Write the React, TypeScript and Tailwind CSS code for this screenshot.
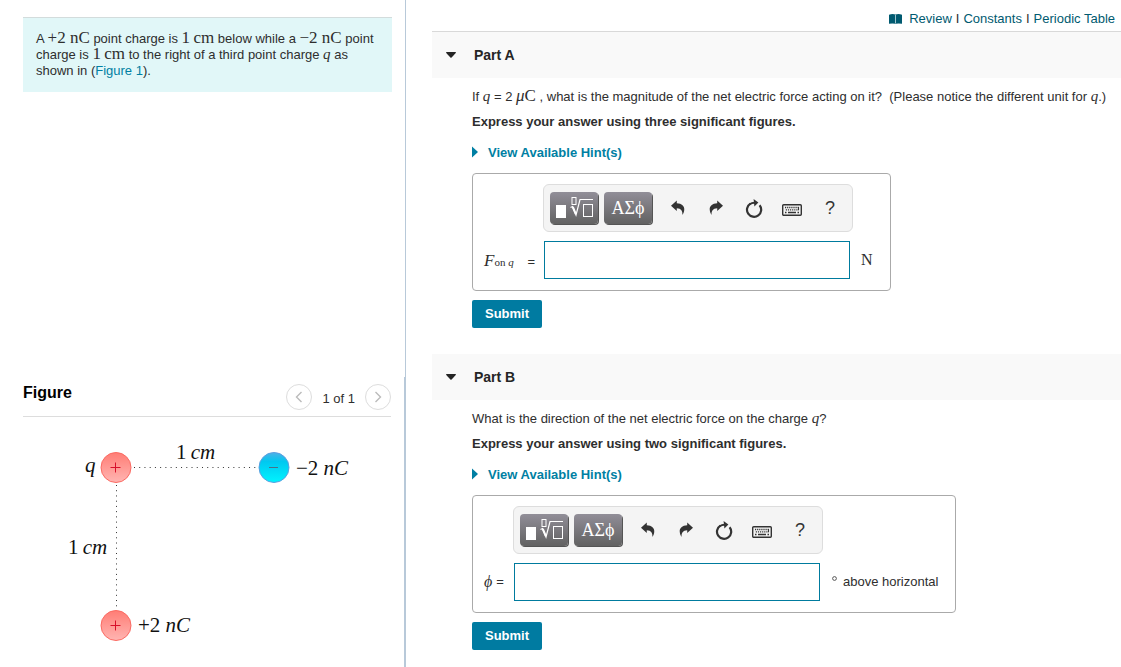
import React, { useState } from "react";

// Inline math set in a serif face, in a box that stays inside the 16px line
function Math({ children, variable = false }: { children: React.ReactNode; variable?: boolean }) {
    return (
        <span
            className={`inline-block font-['Liberation_Serif',serif] leading-[13px] whitespace-nowrap ${variable ? "text-[15px] italic" : "text-[17px]"}`}
        >
            {children}
        </span>
    );
}

function BookIcon() {
    return (
        <svg width="13" height="10" viewBox="0 0 13 10" aria-hidden>
            <path d="M0 .8Q3.5 -.6 6.5 .6Q9.5 -.6 13 .8V9.8Q9.5 9 6.5 9.8Q3.5 9 0 9.8Z" fill="#005a70" />
            <path d="M6.5 .8V9.4" stroke="#9fc4cd" strokeWidth="1" />
        </svg>
    );
}

function TemplateIcon() {
    return (
        <svg width="38" height="22" viewBox="0 0 38 22" aria-hidden fill="none" stroke="#fff">
            <rect x="1" y="8" width="10" height="13" fill="#fff" stroke="none" />
            <rect x="17" y=".5" width="4" height="7" strokeWidth="1" />
            <path d="M15.5 10.5L17.5 9.5L21 18L25 2.5H38" strokeWidth="1.2" />
            <path d="M17.8 10L20.8 17" strokeWidth="2" />
            <rect x="28.5" y="7.5" width="9" height="12" strokeWidth="1" />
        </svg>
    );
}

function UndoIcon({ flip = false }: { flip?: boolean }) {
    return (
        <svg width="14" height="16" viewBox="0 0 15 16" aria-hidden fill="#333" className={flip ? "-scale-x-100" : ""}>
            <path d="M0 5.5L6.2 0V3C11.5 3.2 14.6 6 14.2 10.2C14 12.6 13 14.4 12.2 15.5C12.6 11.5 11 8.4 6.2 8.3V11.2Z" />
        </svg>
    );
}

function ResetIcon() {
    return (
        <svg width="18" height="19" viewBox="0 0 18 19" aria-hidden>
            <path d="M5.4 4.6A7.1 7.1 0 1 0 14.6 6.2" fill="none" stroke="#333" strokeWidth="2.2" />
            <path d="M4.8 5.2Q7 3.6 10 3.8" fill="none" stroke="#333" strokeWidth="2" />
            <path d="M8.6 0L13.4 3.6L9.4 7.4Z" fill="#333" />
        </svg>
    );
}

function KeyboardIcon() {
    return (
        <svg width="20" height="16" viewBox="0 -4 20 16" aria-hidden fill="none" stroke="#333">
            <rect x=".7" y=".7" width="18.6" height="10.6" rx="1" strokeWidth="1.4" />
            <path d="M3 3.5H17" strokeWidth="1.3" strokeDasharray="1.2 .9" />
            <path d="M3.8 5.8H17" strokeWidth="1.3" strokeDasharray="1.2 .9" />
            <path d="M3 8.5H4.5M6 8.5H14M15.5 8.5H17" strokeWidth="1.4" />
            <path d="M16.5 3V6" strokeWidth="1.1" />
        </svg>
    );
}

function ToolButton({ label, children }: { label: string; children: React.ReactNode }) {
    return (
        <button type="button" aria-label={label} className="flex h-[33px] w-[38px] items-center justify-center text-[#333]">
            {children}
        </button>
    );
}

const paletteButton =
    "flex h-8 w-12 items-center justify-center rounded bg-linear-to-b from-[#918e98] to-[#626262] text-white shadow-[1px_1px_0_#555]";

function MathToolbar() {
    return (
        <div
            role="toolbar"
            aria-label="Equation tools"
            className="flex h-12 w-[310px] items-center gap-1.5 rounded-md border border-[#ddd] bg-[#f4f4f4] pl-1.5"
        >
            <button type="button" aria-label="Templates" className={paletteButton}>
                <TemplateIcon />
            </button>
            <button type="button" aria-label="Symbols" className={paletteButton}>
                <span className="font-['Liberation_Serif','DejaVu_Serif',serif] text-[18px] leading-none">ΑΣϕ</span>
            </button>
            <div className="flex pl-px">
                <ToolButton label="Undo">
                    <UndoIcon />
                </ToolButton>
                <ToolButton label="Redo">
                    <UndoIcon flip />
                </ToolButton>
                <ToolButton label="Reset">
                    <ResetIcon />
                </ToolButton>
                <ToolButton label="Keyboard shortcuts">
                    <KeyboardIcon />
                </ToolButton>
                <ToolButton label="Help">
                    <span className="text-[18px] leading-none">?</span>
                </ToolButton>
            </div>
        </div>
    );
}

type PartProps = {
    id: string;
    title: string;
    topBorder?: boolean;
    question: React.ReactNode;
    instruction: string;
    symbol: React.ReactNode;
    unit: React.ReactNode;
};

function Part({ id, title, topBorder = false, question, instruction, symbol, unit }: PartProps) {
    const [open, setOpen] = useState(true);

    return (
        <section>
            <h2 className={`bg-[#f9f9f9] ${topBorder ? "border-t border-[#d9d9d9]" : ""}`}>
                <button
                    type="button"
                    aria-expanded={open}
                    onClick={() => setOpen(!open)}
                    className="flex h-[46px] w-full items-center gap-[18px] pl-3.5 text-left text-[14px] font-bold text-[#252525]"
                >
                    <svg width="10" height="6" viewBox="0 0 10 6" aria-hidden fill="#252525">
                        <path d="M0 .8Q0 0 .8 0H9.2Q10 0 10 .8L5.6 5.6Q5 6 4.4 5.6Z" />
                    </svg>
                    {title}
                </button>
            </h2>

            {open && (
                <form className="pt-[11px] pl-10" onSubmit={(e) => e.preventDefault()}>
                    <p>{question}</p>
                    <p className="mt-[9px] font-bold">{instruction}</p>
                    <button type="button" className="mt-[15px] flex items-center gap-2.5 font-bold text-[#007fa3]">
                        <svg width="6" height="14" viewBox="0 0 6 14" aria-hidden fill="#007fa3">
                            <path d="M0 .5L6 6L0 11.5Z" />
                        </svg>
                        View Available Hint(s)
                    </button>

                    <div className="mt-3 grid w-fit grid-cols-[auto_auto_auto] items-center gap-y-[9px] rounded border border-[#aaa] px-[11px] pt-2.5 pb-[11px]">
                        <div className="col-start-2">
                            <MathToolbar />
                        </div>
                        <label htmlFor={id} className="col-start-1">
                            {symbol}
                        </label>
                        <input id={id} type="text" className="ml-px h-[38px] w-[306px] border border-[#007b9e] bg-white px-2 outline-none" />
                        <span>{unit}</span>
                    </div>

                    <button type="submit" className="mt-[9px] block h-7 w-[70px] rounded-xs bg-[#007ba1] font-bold text-white">
                        Submit
                    </button>
                </form>
            )}
        </section>
    );
}

function Charge({ cx, cy, negative = false }: { cx: number; cy: number; negative?: boolean }) {
    return (
        <g>
            <circle
                cx={cx}
                cy={cy}
                r="15"
                fill={negative ? "url(#negative)" : "url(#positive)"}
                stroke={negative ? "#5b9ee0" : "#fb6a62"}
            />
            <path
                d={negative ? `M${cx - 5} ${cy}h9` : `M${cx - 5.5} ${cy}h10M${cx - 0.5} ${cy - 5}v10`}
                stroke={negative ? "#4a7088" : "#d8102a"}
                strokeWidth="1"
            />
        </g>
    );
}

function ChargeDiagram() {
    return (
        <svg
            width="369"
            height="250"
            viewBox="0 0 369 250"
            role="img"
            aria-label="Charges q, -2 nC and +2 nC"
            className="block font-['Liberation_Serif',serif] text-[21px]"
        >
            <defs>
                <linearGradient id="positive" x1="0" y1="0" x2="0" y2="1">
                    <stop offset="0" stopColor="#ff7d75" />
                    <stop offset="1" stopColor="#ffb5b2" />
                </linearGradient>
                <linearGradient id="negative" x1="0" y1="0" x2="0" y2="1">
                    <stop offset="0" stopColor="#4fb0e6" />
                    <stop offset=".3" stopColor="#00c8f0" />
                    <stop offset="1" stopColor="#00f4ff" />
                </linearGradient>
            </defs>
            <path d="M111 50.5H235M93.5 68V192" fill="none" stroke="#333" strokeDasharray="1 4.23" />
            <Charge cx={93} cy={50.5} />
            <Charge cx={251} cy={50.5} negative />
            <Charge cx={93} cy={208.5} />
            <g fill="#111">
                <text x="62" y="55" fontStyle="italic">q</text>
                <text x="153" y="42">1&#8201;<tspan fontStyle="italic">cm</tspan></text>
                <text x="273" y="58">−2&nbsp;<tspan fontStyle="italic">nC</tspan></text>
                <text x="45" y="137">1&#8201;<tspan fontStyle="italic">cm</tspan></text>
                <text x="115" y="215">+2&nbsp;<tspan fontStyle="italic">nC</tspan></text>
            </g>
        </svg>
    );
}

function PagerButton({ label, d }: { label: string; d: string }) {
    return (
        <button type="button" aria-label={label} className="flex size-[26px] items-center justify-center rounded-full border border-[#ddd]">
            <svg width="8" height="12" viewBox="0 0 8 12" aria-hidden fill="none" stroke="#bbb" strokeWidth="1.4">
                <path d={d} />
            </svg>
        </button>
    );
}

export default function App() {
    return (
        <div className="flex min-h-screen bg-white font-['Liberation_Sans',Arial,sans-serif] text-[13px] leading-4 text-[#2e2e2e]">
            <aside className="flex w-[406px] shrink-0 flex-col justify-between border-r border-[#b8c9d9] pt-[17px]">
                <p className="mr-[13px] ml-[23px] border-t border-[#d3dcdc] bg-[#e1f7f8] py-[13px] pr-2 pl-[13px]">
                    A <Math>+2&nbsp;nC</Math> point charge is <Math>1&#8201;cm</Math> below while a <Math>−2&nbsp;nC</Math> point
                    charge is <Math>1&#8201;cm</Math> to the right of a third point charge <Math variable>q</Math> as shown in (
                    <a href="#figure" className="text-[#007fa3]">
                        Figure 1
                    </a>
                    ).
                </p>

                <section id="figure" className="border-r border-[#b8c9d9] pr-[13px] pl-[23px]">
                    <div className="flex h-10 items-center justify-between border-b border-[#ddd]">
                        <h2 className="pb-2 text-[16px] font-bold text-black">Figure</h2>
                        <div className="flex items-center gap-2.5">
                            <PagerButton label="Previous figure" d="M6.5 1L1.5 6L6.5 11" />
                            <span className="pt-1">1 of 1</span>
                            <PagerButton label="Next figure" d="M1.5 1L6.5 6L1.5 11" />
                        </div>
                    </div>
                    <ChargeDiagram />
                </section>
            </aside>

            <main className="min-w-0 flex-1 pl-[26px]">
                <nav className="flex h-[31px] items-center justify-end gap-1 pt-1.5 pr-1.5 text-[#005a70]">
                    <a href="#review" className="flex items-center gap-[7px]">
                        <BookIcon />
                        Review
                    </a>
                    <span className="text-[#2e2e2e]">I</span>
                    <a href="#constants">Constants</a>
                    <span className="text-[#2e2e2e]">I</span>
                    <a href="#periodic-table">Periodic Table</a>
                </nav>

                <div className="flex flex-col gap-[26px]">
                    <Part
                        id="force"
                        title="Part A"
                        topBorder
                        question={
                            <>
                                If <Math variable>q</Math> = 2 <Math><i>μ</i>C</Math> , what is the magnitude of the net electric force
                                acting on it?&nbsp; (Please notice the different unit for <Math variable>q</Math>.)
                            </>
                        }
                        instruction="Express your answer using three significant figures."
                        symbol={
                            <span className="flex w-[59px] items-baseline font-['Liberation_Serif',serif]">
                                <i className="text-[17px]">F</i>
                                <span className="pt-1 text-[11px]">
                                    on <i>q</i>
                                </span>
                                <span className="ml-auto pr-2 font-['Liberation_Sans',sans-serif]">=</span>
                            </span>
                        }
                        unit={<span className="pr-1.5 pl-2 font-['Liberation_Serif',serif] text-[16px]">N</span>}
                    />

                    <Part
                        id="direction"
                        title="Part B"
                        question={
                            <>
                                What is the direction of the net electric force on the charge <Math variable>q</Math>?
                            </>
                        }
                        instruction="Express your answer using two significant figures."
                        symbol={
                            <span className="flex w-[29px] items-center gap-1">
                                <i className="font-['Liberation_Serif','DejaVu_Serif',serif] text-[16px]">ϕ</i>=
                            </span>
                        }
                        unit={
                            <span className="flex items-center gap-1.5 pr-1.5 pl-[9px]">
                                <svg width="5" height="13" viewBox="0 0 5 13" aria-label="degrees" fill="none" stroke="#333" strokeWidth=".8">
                                    <circle cx="2.5" cy="2.5" r="1.9" />
                                </svg>
                                above horizontal
                            </span>
                        }
                    />
                </div>
            </main>
        </div>
    );
}
